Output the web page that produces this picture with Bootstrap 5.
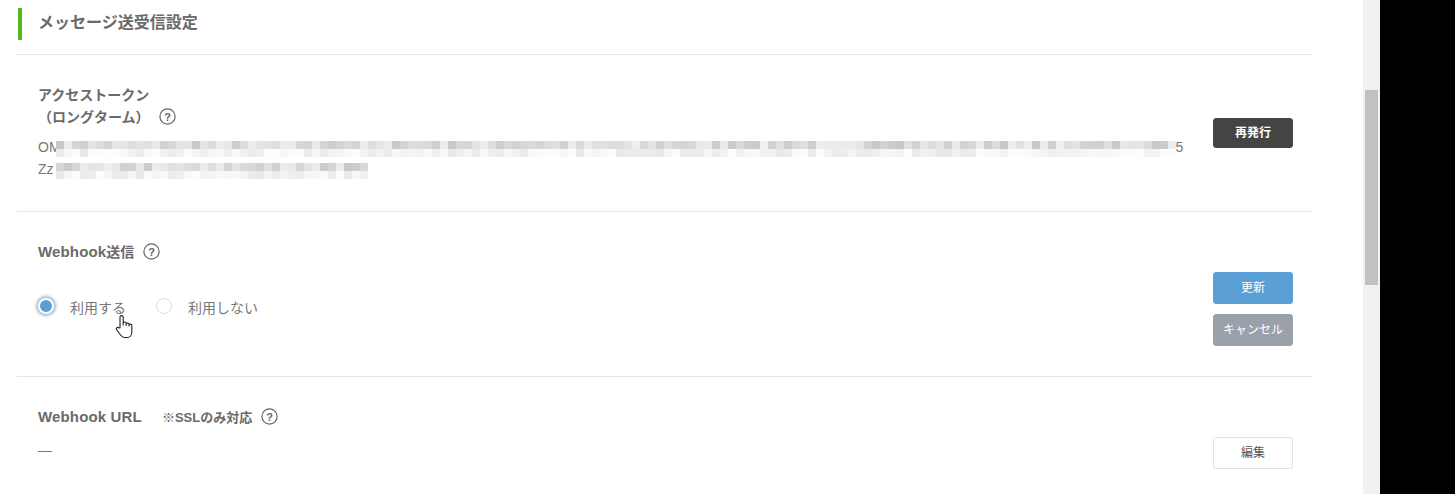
<!DOCTYPE html>
<html lang="ja">
<head>
<meta charset="utf-8">
<title>メッセージ送受信設定</title>
<link href="https://cdn.jsdelivr.net/npm/bootstrap@5.3.0/dist/css/bootstrap.min.css" rel="stylesheet">
<style>
html,body{height:494px;overflow:hidden;margin:0;background:#fff}
body{font-family:"Liberation Sans","Noto Sans CJK JP",sans-serif;color:#666;font-size:14px}
.shell{height:494px;width:1455px}
.pane{width:1363px;height:494px;overflow:hidden;padding-left:17px;padding-right:50px}
.track{width:17px;height:494px;background:#f1f1f1;padding:90px 2px 0}
.thumb{height:195px;background:#c1c1c1}
.void{width:75px;height:494px;background:#000}
.head-zone{height:55px;border-bottom:1px solid #e5e5e5;padding-top:8px}
.head-title{border-left:4px solid #4fb81c;margin-left:1px;height:32px;line-height:30px;padding-left:16px;font-size:16px;font-weight:700;color:#6a6a6a;margin-bottom:0}
.blk{border-bottom:1px solid #e5e5e5;padding-left:21px;padding-right:20px}
.blk1{height:157px;padding-top:29px}
.blk2{height:165px;padding-top:29px}
.blk3{padding-top:29px}
.side{width:80px;flex:none}
.side1{padding-top:34px}
.side2{padding-top:31px}
.side3{padding-top:31px}
.label{font-size:14px;font-weight:700;line-height:22px;color:#6a6a6a;margin:0}
.wide{font-size:15px;letter-spacing:.15px}
.hint{display:inline-block;width:17px;height:17px;vertical-align:-3px;margin-left:9px}
.token{font-size:14px;line-height:22px;margin-top:8px;width:1145px;position:relative;height:44px;color:#777}
.tail{margin-left:1115px}
.mosaic{position:absolute;left:18px;top:5px}
.act{width:80px;font-size:12px;padding:0;border-radius:3px;display:block;line-height:1}
.act-dark{height:30px;background:#444;border:1px solid #444;color:#fff;font-weight:700}
.act-blue{height:32px;background:#5a9fd6;border:1px solid #5a9fd6;color:#fff}
.act-gray{height:32px;background:#9aa1aa;border:1px solid #9aa1aa;color:#fff;margin-top:10px}
.act-white{height:32px;background:#fff;border:1px solid #e2e2e2;color:#555}
.radios{margin-top:33px;margin-left:0;position:relative}
.dot{width:16px;height:16px;border-radius:50%;display:block;flex:none;margin-bottom:2px}
.dot-on{background:#5a9fd6;border:2px solid #fff;box-shadow:0 0 0 1px #a9c9e2,0 0 3px 2px rgba(90,110,130,.5)}
.dot-off{background:#fff;border:1px solid #ddd}
.rtext{font-size:14px;color:#777;line-height:20px;padding-top:2px}
.first-r{margin-right:30px;gap:16px}
.second-r{gap:16px}
.pointer{position:absolute;left:77px;top:18px;width:19px;height:25px}
.sub{font-weight:700;margin-left:20px;font-size:13px}
.dash{font-size:14px;line-height:20px;margin-top:11px;color:#777}
</style>
</head>
<body>
<div class="shell d-flex">
  <div class="pane">
    <div class="head-zone"><h2 class="head-title">メッセージ送受信設定</h2></div>

    <section class="blk blk1 d-flex justify-content-between">
      <div>
        <p class="label">アクセストークン<br>（ロングターム）<svg class="hint" viewBox="0 0 17 17"><circle cx="8.5" cy="8.5" r="7.6" fill="none" stroke="#666" stroke-width="1.2"/><text x="8.5" y="12.5" font-size="11" text-anchor="middle" fill="#666" font-family="Liberation Sans">?</text></svg></p>
        <div class="token">OM<span class="tail">5</span><br>Zz
          <svg id="mz" class="mosaic" width="1120" height="44" viewBox="0 0 1120 44"></svg>
        </div>
      </div>
      <div class="side side1"><button type="button" class="btn act act-dark">再発行</button></div>
    </section>

    <section class="blk blk2 d-flex justify-content-between">
      <div>
        <p class="label"><span class="wide">Webhook</span>送信<svg class="hint" viewBox="0 0 17 17"><circle cx="8.5" cy="8.5" r="7.6" fill="none" stroke="#666" stroke-width="1.2"/><text x="8.5" y="12.5" font-size="11" text-anchor="middle" fill="#666" font-family="Liberation Sans">?</text></svg></p>
        <div class="radios d-flex align-items-center">
          <div class="d-flex align-items-center first-r"><span class="dot dot-on"></span><span class="rtext">利用する</span></div>
          <div class="d-flex align-items-center second-r"><span class="dot dot-off"></span><span class="rtext">利用しない</span></div>
          <svg class="pointer" viewBox="0 0 19 25"><path d="M5 14V3.2a1.6 1.6 0 0 1 3.200 0V11V9.500a1.500 1.500 0 0 1 3 0V11.500V10.500a1.400 1.400 0 0 1 2.800 0V12V11.500a1.400 1.400 0 0 1 2.800 0V18c0 3-1.800 5.500-4.500 5.500H9.500c-1.700 0-2.700-.8-3.700-2.200L1.500 15.500c-.8-1.300 1-2.800 2.200-1.700Z" fill="#fff" stroke="#222" stroke-width="1.100" stroke-linejoin="round"/></svg>
        </div>
      </div>
      <div class="side side2">
        <button type="button" class="btn act act-blue">更新</button>
        <button type="button" class="btn act act-gray">キャンセル</button>
      </div>
    </section>

    <section class="blk3 d-flex justify-content-between" style="padding-left:21px;padding-right:20px">
      <div>
        <p class="label"><span class="wide">Webhook URL</span><span class="sub">※SSLのみ対応</span><svg class="hint" viewBox="0 0 17 17"><circle cx="8.5" cy="8.5" r="7.600" fill="none" stroke="#666" stroke-width="1.200"/><text x="8.5" y="12.500" font-size="11" text-anchor="middle" fill="#666" font-family="Liberation Sans">?</text></svg></p>
        <div class="dash">—</div>
      </div>
      <div class="side side3"><button type="button" class="btn act act-white">編集</button></div>
    </section>
  </div>
  <div class="track"><div class="thumb"></div></div>
  <div class="void"></div>
</div>
<script>
(function(){
  var s=document.getElementById('mz'),h='',seed=7;
  function r(){seed=(seed*16807)%2147483647;return seed/2147483647}
  function row(y,w,base,spread){for(var x=0;x<w;x+=8){var v=Math.round(base+r()*spread);h+='<rect x="'+x+'" y="'+y+'" width="8" height="8" fill="rgb('+v+','+v+','+v+')"/>'}}
  row(0,1120,200,40);row(8,1120,232,22);row(22,312,200,40);row(30,312,232,22);
  s.innerHTML=h;
})();
</script>
<script src="https://cdn.jsdelivr.net/npm/bootstrap@5.3.0/dist/js/bootstrap.bundle.min.js"></script>
</body>
</html>
